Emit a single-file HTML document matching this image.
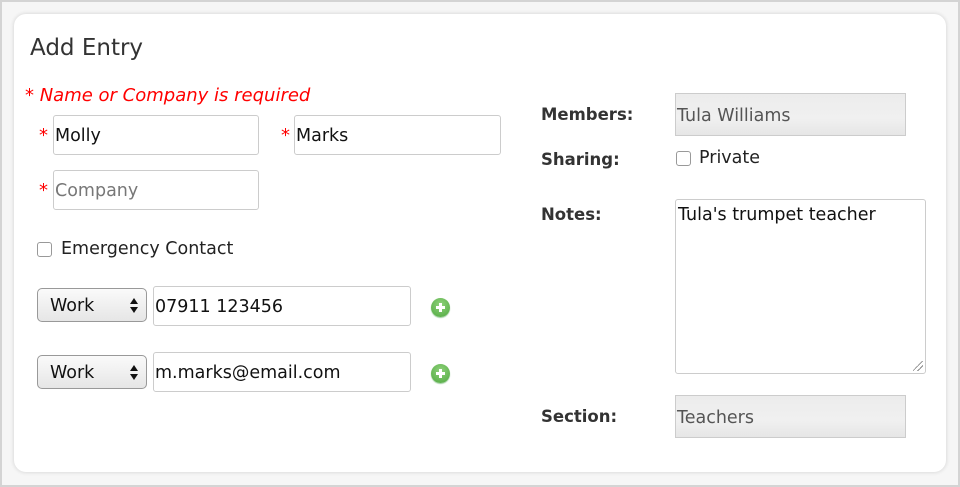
<!DOCTYPE html>
<html><head><style>
*{box-sizing:border-box;margin:0;padding:0}
body{width:960px;height:487px;background:#f6f6f6;position:relative;overflow:hidden;font-family:"DejaVu Sans","Liberation Sans",sans-serif;color:#222}
.frame{position:absolute;left:0;top:0;width:960px;height:487px;border:2px solid #d4d4d4}
.card{position:absolute;left:14px;top:14px;width:932px;height:458px;background:#fff;border-radius:12px;box-shadow:0 0 3px 1px #ddd}
.a{position:absolute;white-space:nowrap}
.inp{position:absolute;border:1px solid #ccc;border-radius:3px;background:#fff;font-size:17.5px;line-height:41px;padding-left:1px;color:#111;white-space:nowrap}
.star{position:absolute;color:#f00;font-size:18px}
.sel{position:absolute;border:1px solid #999;border-radius:5px;background:linear-gradient(#fafafa,#e6e6e6);font-size:17.5px;line-height:35px;padding-left:12px;color:#111}
.sel:after{content:"";position:absolute;right:8px;top:9px;border:4px solid transparent;border-bottom:6px solid #111;border-top:0}
.sel:before{content:"";position:absolute;right:8px;top:18px;border:4px solid transparent;border-top:6px solid #111;border-bottom:0}
.plus{position:absolute;width:19px;height:19px;border-radius:50%;background:radial-gradient(circle at 50% 35%,#8fd27b,#4fa83f);box-shadow:0 1px 1px #9c9}
.plus:before{content:"";position:absolute;left:5px;top:8px;width:9px;height:3px;background:#fff}
.plus:after{content:"";position:absolute;left:8px;top:5px;width:3px;height:9px;background:#fff}
.cb{position:absolute;width:15px;height:15px;border:1px solid #999;border-radius:3px;background:#fff}
.lbl{position:absolute;font-weight:bold;font-size:16.5px;color:#333}
.ro{position:absolute;border:1px solid #ccc;background:linear-gradient(#ececec,#f0f0f0 60%,#e6e6e6);font-size:17.5px;line-height:44px;color:#555;padding-left:1px}
</style></head><body>
<div class="frame"></div>
<div class="card"></div>
<div class="a" style="left:30px;top:35px;font-size:23px;color:#333">Add Entry</div>
<div class="a" style="left:25px;top:85px;font-size:18px;color:#f00;font-style:italic">* Name or Company is required</div>
<div class="star" style="left:39px;top:125px">*</div>
<div class="inp" style="left:53px;top:115px;width:206px;height:40px">Molly</div>
<div class="star" style="left:281px;top:125px">*</div>
<div class="inp" style="left:294px;top:115px;width:207px;height:40px">Marks</div>
<div class="star" style="left:39px;top:180px">*</div>
<div class="inp" style="left:53px;top:170px;width:206px;height:40px;color:#777">Company</div>
<div class="cb" style="left:37px;top:242px"></div>
<div class="a" style="left:61px;top:239px;font-size:17.5px;color:#222">Emergency Contact</div>
<div class="sel" style="left:37px;top:288px;width:110px;height:34px">Work</div>
<div class="inp" style="left:153px;top:286px;width:258px;height:40px">07911 123456</div>
<div class="plus" style="left:431px;top:298px"></div>
<div class="sel" style="left:37px;top:355px;width:110px;height:34px">Work</div>
<div class="inp" style="left:153px;top:352px;width:258px;height:40px">m.marks@email.com</div>
<div class="plus" style="left:431px;top:364px"></div>
<div class="lbl" style="left:541px;top:105px">Members:</div>
<div class="ro" style="left:675px;top:93px;width:231px;height:43px">Tula Williams</div>
<div class="lbl" style="left:541px;top:150px">Sharing:</div>
<div class="cb" style="left:676px;top:151px"></div>
<div class="a" style="left:699px;top:148px;font-size:17.5px;color:#222">Private</div>
<div class="lbl" style="left:541px;top:205px">Notes:</div>
<div class="inp" style="left:675px;top:199px;width:251px;height:175px;line-height:30px;padding-left:2px">Tula's trumpet teacher</div>
<div class="a" style="left:913px;top:361px;width:10px;height:10px;background:linear-gradient(135deg,transparent 45%,#888 45%,#888 52%,transparent 52%,transparent 70%,#888 70%,#888 77%,transparent 77%)"></div>
<div class="lbl" style="left:541px;top:407px">Section:</div>
<div class="ro" style="left:675px;top:395px;width:231px;height:43px">Teachers</div>
</body></html>
